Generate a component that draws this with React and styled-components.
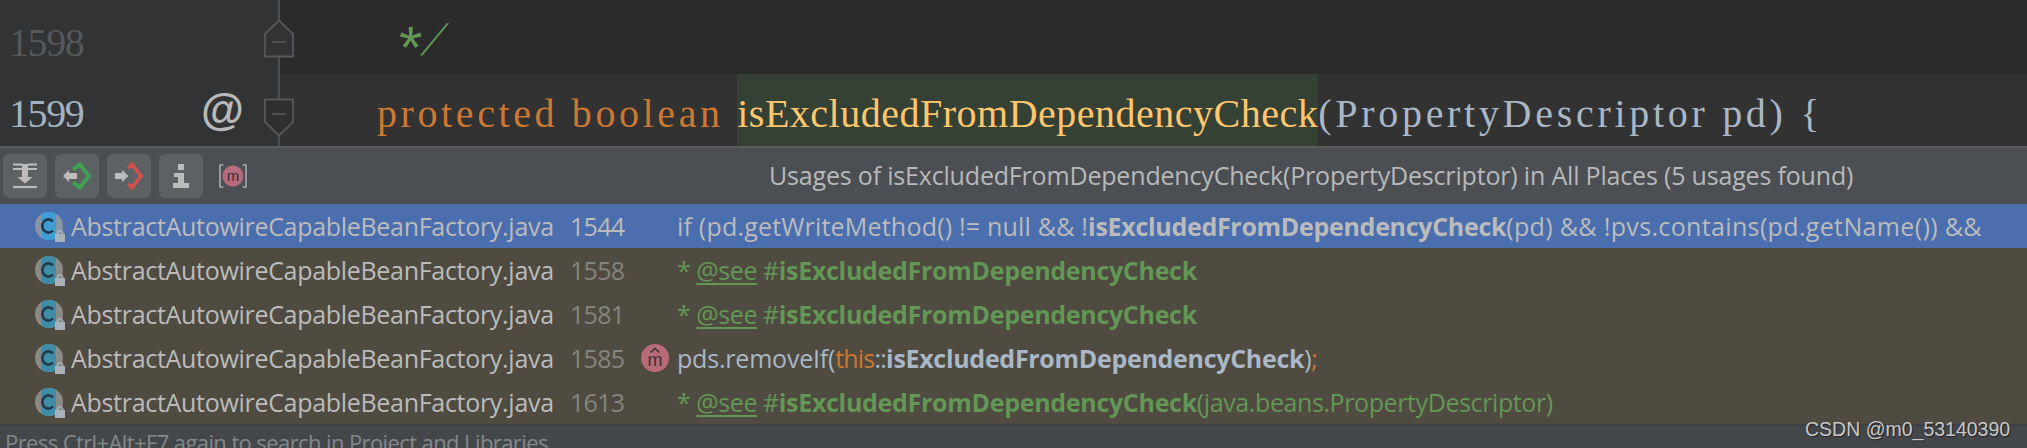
import React from "react";
import styled, { createGlobalStyle } from "styled-components";

const Global = createGlobalStyle`
  html, body { margin: 0; padding: 0; background: #2b2b2b; }
  #root { width: 2027px; height: 448px; overflow: hidden; }
`;

const Page = styled.div`
  position: relative;
  width: 2027px;
  height: 448px;
  overflow: hidden;
  display: flex;
  flex-direction: column;
  background: #2b2b2b;
`;

const Editor = styled.div`
  position: relative;
  height: 146px;
  flex: none;
  display: flex;
  flex-direction: column;
`;

const EditorRow = styled.div`
  display: flex;
  height: ${(p) => p.$h}px;
  overflow: hidden;
`;

const Gutter = styled.div`
  width: 279px;
  flex: none;
  background: #313335;
  padding-left: 9px;
  box-sizing: border-box;
  display: flex;
  align-items: flex-start;
`;

const LineNumber = styled.span`
  display: block;
  font: 40px/${(p) => p.$h}px "Liberation Serif", serif;
  letter-spacing: -1.4px;
  transform: translateY(${(p) => p.$shift}px);
  color: ${(p) => p.$color};
  width: 74px;
  white-space: nowrap;
`;

const AtMark = styled.span`
  font: bold 44px/72px "Liberation Sans", sans-serif;
  color: #b9b9b9;
  margin-left: 118px;
`;

const CodeArea = styled.div`
  flex: 1;
  background: ${(p) => p.$bg};
  padding-left: 98px;
  overflow: hidden;
`;

const Code = styled.div`
  font: 40px/${(p) => p.$h}px "Liberation Serif", serif;
  height: ${(p) => p.$h}px;
  white-space: pre;
  color: #a9b7c6;
  letter-spacing: 3.7px;
  display: flex;
`;

const Keyword = styled.span`
  color: #cc7832;
  letter-spacing: 3.6px;
  padding-top: 4px;
`;

const Highlighted = styled.span`
  color: #ffc66d;
  background: #344134;
  letter-spacing: 0.5px;
  padding-top: 4px;
`;

const Params = styled.span`
  padding-top: 4px;
`;

const DocStar = styled.span`
  color: #629755;
  margin-left: 22px;
  font: 60px/74px "Liberation Sans", sans-serif;
  transform: translateY(11px);
`;

const DocSlash = styled.span`
  color: #629755;
  display: inline-block;
  font: 48px/74px "Liberation Serif", serif;
  transform: translateY(2px) skewX(-26deg);
  margin-left: 2px;
`;

const FoldOverlay = styled.svg`
  position: absolute;
  left: 260px;
  top: 0;
`;

const Popup = styled.div`
  flex: 1;
  display: flex;
  flex-direction: column;
  border-top: 2px solid #5a5c5e;
  min-height: 0;
`;

const Toolbar = styled.div`
  height: 56px;
  flex: none;
  background: #4b4e52;
  display: flex;
  align-items: center;
  padding-left: 3px;
  position: relative;
`;

const ToolButton = styled.div`
  width: 44px;
  height: 44px;
  border-radius: 6px;
  background: #5c6164;
  margin-right: 8px;
  display: flex;
  align-items: center;
  justify-content: center;
  flex: none;
`;

const FilterIcon = styled.svg`
  margin-left: 8px;
  flex: none;
`;

const Title = styled.div`
  position: absolute;
  left: 769px;
  top: 0;
  height: 56px;
  line-height: 54px;
  font-family: "Open Sans", sans-serif;
  font-size: 25px;
  color: #b7b9ba;
  white-space: nowrap;
  letter-spacing: -0.18px;
`;

const Rows = styled.div`
  display: flex;
  flex-direction: column;
  flex: none;
`;

const Row = styled.div`
  height: 44px;
  display: flex;
  align-items: center;
  background: ${(p) => (p.$selected ? "#4b6eaf" : "#4f4b41")};
  font-family: "Open Sans", sans-serif;
  font-size: 25px;
  color: #bbbbbb;
  white-space: pre;
`;

const ClassIcon = styled.svg`
  margin-left: 34px;
  flex: none;
  width: 32px;
  height: 32px;
`;

const FileName = styled.span`
  margin-left: 5px;
  width: 499px;
  flex: none;
  letter-spacing: -0.3px;
`;

const LineNo = styled.span`
  width: 71px;
  flex: none;
  letter-spacing: -0.7px;
  color: ${(p) => (p.$selected ? "#bbbbbb" : "#85857f")};
`;

const MethodSlot = styled.span`
  width: 36px;
  flex: none;
  display: flex;
  align-items: center;
`;

const MethodBadge = styled.svg`
  width: 28px;
  height: 28px;
`;

const Plain = styled.span`
  color: ${(p) => p.$c || "inherit"};
  letter-spacing: ${(p) => p.$ls ?? 0.2}px;
`;

const Strong = styled.b`
  font-weight: 700;
  letter-spacing: -0.3px;
`;

const Green = styled.span`
  color: #629755;
`;

const See = styled.span`
  text-decoration: underline;
  text-underline-offset: 3px;
  letter-spacing: -0.4px;
`;

const Footer = styled.div`
  flex: 1;
  background: #43474a;
  border-top: 2px solid #3e4144;
  font-family: "Open Sans", sans-serif;
  font-size: 22px;
  letter-spacing: -0.6px;
  line-height: 32px;
  color: #84888a;
  padding-left: 5px;
  overflow: hidden;
  white-space: nowrap;
`;

const Watermark = styled.div`
  position: absolute;
  left: 1805px;
  top: 418px;
  font: 19.5px/22px "Liberation Sans", sans-serif;
  color: #c8c8c8;
  text-shadow: 1px 1px 1px #222;
  white-space: nowrap;
`;

const Fold = () => (
  <FoldOverlay width="40" height="146" viewBox="0 0 40 146" fill="none">
    <path d="M19 0V146" stroke="#55585a" strokeWidth="1.6" />
    <path d="M19 20.5L33 34V56.5H5V34Z" fill="#313335" stroke="#55585a" strokeWidth="1.8" />
    <path d="M12 42H26" stroke="#55585a" strokeWidth="1.6" />
    <path d="M5 99.5H33V122L19 135.5L5 122Z" fill="#2f2f30" stroke="#55585a" strokeWidth="1.8" />
    <path d="M12 114H26" stroke="#55585a" strokeWidth="1.6" />
  </FoldOverlay>
);

const LockClassIcon = ({ id, selected }) => (
  <ClassIcon viewBox="0 0 32 32">
    <clipPath id={id}>
      <circle cx="15" cy="16" r="14" />
    </clipPath>
    <g clipPath={`url(#${id})`}>
      <rect x="0" y="0" width="32" height="32" fill={selected ? "#8b95a8" : "#8b8a86"} />
      <rect x="7" y="0" width="15" height="32" fill={selected ? "#3f9ed4" : "#3f8da6"} />
    </g>
    <path d="M19 11.5A6.2 6.6 0 1 0 19 20.5" fill="none" stroke="#24384c" strokeWidth="2.6" />
    <path d="M23.5 24V22.5A2.6 2.6 0 0 1 28.5 22.5V24" fill="none" stroke="#a9b2ba" strokeWidth="1.8" />
    <rect x="21" y="24" width="10" height="8" fill="#a9b2ba" />
  </ClassIcon>
);

const Expand = () => (
  <svg width="28" height="32" viewBox="0 0 28 32" fill="none">
    <path d="M2 4.5H11M2 9H11M17 4.5H26M17 9H26" stroke="#bcbcbc" strokeWidth="2" />
    <path d="M11 4H17V17H21.5L14 23.5L6.5 17H11Z" fill="#bcbcbc" />
    <path d="M2 27H26" stroke="#bcbcbc" strokeWidth="2.2" />
  </svg>
);

const ArrowLeft = () => (
  <svg width="30" height="30" viewBox="0 0 30 30" fill="none">
    <path d="M11 8.5L18 3.5L27 15L18 26.5L11 21.5" stroke="#3f9f55" strokeWidth="4" />
    <path d="M1 15L7 9V12H15V18H7V21Z" fill="#bcbcbc" />
  </svg>
);

const ArrowRight = () => (
  <svg width="30" height="30" viewBox="0 0 30 30" fill="none">
    <path d="M14 7L18 3.5L27 15L18 26.5L14 23" stroke="#c9524c" strokeWidth="4" />
    <path d="M1 12H8V9L14.5 15L8 21V18H1Z" fill="#bcbcbc" />
  </svg>
);

const Info = () => (
  <svg width="20" height="28" viewBox="0 0 20 28" fill="none">
    <rect x="7" y="2" width="6" height="6" fill="#bcbcbc" />
    <path d="M3 11H13V21H18V26H2V21H7V15H3Z" fill="#bcbcbc" />
  </svg>
);

const MethodFilter = () => (
  <FilterIcon width="28" height="32" viewBox="0 0 28 32" fill="none">
    <path d="M4.5 5H1V27H4.5M23.5 5H27V27H23.5" stroke="#a7acae" strokeWidth="1.6" />
    <circle cx="14" cy="16" r="10.5" fill="#b86b7c" />
    <text x="14" y="21" textAnchor="middle" fontFamily="Liberation Sans" fontSize="15" fill="#2f2f33">m</text>
  </FilterIcon>
);

const MethodHat = () => (
  <MethodBadge viewBox="0 0 28 28">
    <circle cx="14" cy="14" r="14" fill="#b76a78" />
    <text x="14" y="22" textAnchor="middle" fontFamily="Liberation Sans" fontSize="18" fill="#3a3134">m</text>
    <path d="M9.5 8.5L14 4.5L18.5 8.5" fill="none" stroke="#3a3134" strokeWidth="1.5" />
  </MethodBadge>
);

const NAME = "isExcludedFromDependencyCheck";
const FILE = "AbstractAutowireCapableBeanFactory.java";

const SeeLine = ({ tail }) => (
  <Green>
    <Plain $ls={-0.5}>* </Plain>
    <See>@see</See>
    <Plain $ls={-0.5}> #</Plain>
    <Strong>{NAME}</Strong>
    {tail && <Plain $ls={-0.4}>{tail}</Plain>}
  </Green>
);

const usages = [
  {
    no: "1544",
    selected: true,
    code: (
      <span>
        <Plain>if (pd.getWriteMethod() != null &amp;&amp; !</Plain>
        <Strong>{NAME}</Strong>
        <Plain $ls={0.35}>(pd) &amp;&amp; !pvs.contains(pd.getName()) &amp;&amp;</Plain>
      </span>
    ),
  },
  { no: "1558", code: <SeeLine /> },
  { no: "1581", code: <SeeLine /> },
  {
    no: "1585",
    badge: true,
    code: (
      <Plain $c="#a9b7c6" $ls={-0.2}>
        pds.removeIf(
        <Plain $c="#cc7832" $ls={-0.8}>this</Plain>
        <Plain $ls={-0.8}>::</Plain>
        <Strong>{NAME}</Strong>)<Plain $c="#cc7832">;</Plain>
      </Plain>
    ),
  },
  { no: "1613", code: <SeeLine tail="(java.beans.PropertyDescriptor)" /> },
];

export default function App() {
  return (
    <Page>
      <Global />
      <Editor>
        <EditorRow $h={74}>
          <Gutter>
            <LineNumber $color="#54585b" $h={74} $shift={6}>1598</LineNumber>
          </Gutter>
          <CodeArea $bg="#2b2b2b">
            <Code $h={74}>
              <DocStar>*</DocStar>
              <DocSlash>/</DocSlash>
            </Code>
          </CodeArea>
        </EditorRow>
        <EditorRow $h={72}>
          <Gutter>
            <LineNumber $color="#a4b2c0" $h={72} $shift={4}>1599</LineNumber>
            <AtMark>@</AtMark>
          </Gutter>
          <CodeArea $bg="#323232">
            <Code $h={72}>
              <Keyword>protected boolean </Keyword>
              <Highlighted>{NAME}</Highlighted>
              <Params>(PropertyDescriptor pd) {"{"}</Params>
            </Code>
          </CodeArea>
        </EditorRow>
        <Fold />
      </Editor>
      <Popup>
        <Toolbar>
          <ToolButton><Expand /></ToolButton>
          <ToolButton><ArrowLeft /></ToolButton>
          <ToolButton><ArrowRight /></ToolButton>
          <ToolButton><Info /></ToolButton>
          <MethodFilter />
          <Title>Usages of {NAME}(PropertyDescriptor) in All Places (5 usages found)</Title>
        </Toolbar>
        <Rows>
          {usages.map((u) => (
            <Row key={u.no} $selected={u.selected}>
              <LockClassIcon id={`clip-${u.no}`} selected={u.selected} />
              <FileName>{FILE}</FileName>
              <LineNo $selected={u.selected}>{u.no}</LineNo>
              <MethodSlot>{u.badge && <MethodHat />}</MethodSlot>
              {u.code}
            </Row>
          ))}
        </Rows>
        <Footer>Press Ctrl+Alt+F7 again to search in Project and Libraries</Footer>
      </Popup>
      <Watermark>CSDN @m0_53140390</Watermark>
    </Page>
  );
}
